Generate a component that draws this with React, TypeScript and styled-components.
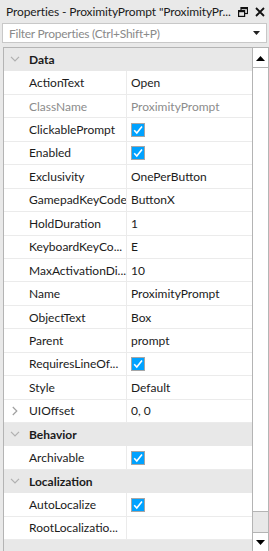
import React from "react";
import styled, { createGlobalStyle } from "styled-components";

const Global = createGlobalStyle`
  html, body { margin: 0; padding: 0; background: #e9e9e9; }
  #root { width: 269px; height: 551px; overflow: hidden; }
  * { box-sizing: border-box; }
`;

const Panel = styled.div`
  width: 269px;
  height: 551px;
  display: flex;
  flex-direction: column;
  background: #e9e9e9;
  font-family: Lato, "Noto Sans", sans-serif;
  font-size: 12px;
  color: #1b1b1b;
`;

const TitleBar = styled.div`
  height: 23px;
  display: flex;
  align-items: center;
  justify-content: space-between;
  padding: 0 4px 0 6px;
  color: #1b1b1b;
  white-space: nowrap;
`;

const TitleText = styled.span`
  letter-spacing: -0.12px;
`;

const TitleIcons = styled.div`
  display: flex;
  align-items: center;
  gap: 7px;
`;

const Filter = styled.div`
  height: 20px;
  margin: 0 2px 0 2px;
  background: #fff;
  border: 1px solid #c8c8c8;
  display: flex;
  align-items: center;
  justify-content: space-between;
  padding: 0 6px 0 6px;
  color: #8a8a8a;
  letter-spacing: -0.25px;
`;

const Frame = styled.div`
  margin: 4px 0 0 3px;
  flex: 1;
  display: flex;
  border: 1px solid #b4b4b4;
  border-right: none;
  border-bottom: none;
  overflow: hidden;
  background: #fff;
`;

const Grid = styled.div`
  flex: 1;
  display: flex;
  flex-direction: column;
  min-width: 0;
`;

const Row = styled.div<{ $header?: boolean }>`
  flex: none;
  height: 23.45px;
  display: flex;
  align-items: stretch;
  background: ${(p) => (p.$header ? "#e8e8e8" : "#fff")};
  border-bottom: 1px solid ${(p) => (p.$header ? "#e8e8e8" : "#ebebeb")};
`;

const Gutter = styled.div`
  width: 24px;
  flex: none;
  display: flex;
  align-items: center;
  justify-content: center;
  padding-right: 2px;
`;

const NameCell = styled.div<{ $dim?: boolean }>`
  width: 99px;
  flex: none;
  display: flex;
  align-items: center;
  padding-left: 1px;
  color: ${(p) => (p.$dim ? "#8c8c8c" : "#1b1b1b")};
  border-right: 1px solid #ebebeb;
  white-space: nowrap;
  overflow: hidden;
`;

const ValueCell = styled.div<{ $dim?: boolean }>`
  flex: 1;
  display: flex;
  align-items: center;
  padding-left: 4px;
  color: ${(p) => (p.$dim ? "#8c8c8c" : "#1b1b1b")};
  white-space: nowrap;
  overflow: hidden;
`;

const HeaderLabel = styled.div`
  display: flex;
  align-items: center;
  font-weight: 700;
  padding-left: 1px;
`;

const Box = styled.div`
  width: 14px;
  height: 14px;
  background: #00a2ff;
  border: 1px solid #a6a6a6;
  display: flex;
  align-items: center;
  justify-content: center;
`;

const Scroll = styled.div`
  width: 17px;
  flex: none;
  display: flex;
  flex-direction: column;
  border-left: 1px solid #b4b4b4;
  border-right: 1px solid #b4b4b4;
  background: #fff;
`;

const ScrollBtn = styled.div<{ $top?: boolean }>`
  height: ${(p) => (p.$top ? "19px" : "18px")};
  flex: none;
  display: flex;
  align-items: center;
  justify-content: center;
  background: #fff;
  border-bottom: ${(p) => (p.$top ? "1px solid #b4b4b4" : "none")};
  margin-top: ${(p) => (p.$top ? "1px" : "0")};
`;

const Thumb = styled.div`
  flex: 1;
  background: #fff;
`;

const Track = styled.div`
  height: 22px;
  flex: none;
  background: #e8e8e8;
  border-top: 1px solid #b4b4b4;
  border-bottom: 1px solid #b4b4b4;
`;

const Check = () => (
  <Box>
    <svg width="12" height="12" viewBox="0 0 12 12">
      <polyline points="2.2,6.2 4.8,9 10,2.6" fill="none" stroke="#fff" strokeWidth="1.6" />
    </svg>
  </Box>
);

const ChevronDown = () => (
  <svg width="10" height="6" viewBox="0 0 10 6">
    <polyline points="1,0.8 5,4.8 9,0.8" fill="none" stroke="#b0b0b0" strokeWidth="1.2" />
  </svg>
);

const ChevronRight = () => (
  <svg width="6" height="10" viewBox="0 0 6 10">
    <polyline points="0.8,1 4.8,5 0.8,9" fill="none" stroke="#a0a0a0" strokeWidth="1.2" />
  </svg>
);

const Tri = ({ up }: { up?: boolean }) => (
  <svg width="9" height="5" viewBox="0 0 9 5">
    <polygon points={up ? "0,5 9,5 4.5,0" : "0,0 9,0 4.5,5"} fill="#000" />
  </svg>
);

type Prop = { name: string; value?: string; check?: boolean; dim?: boolean; expand?: boolean };
type Section = { title: string; props: Prop[] };

const sections: Section[] = [
  {
    title: "Data",
    props: [
      { name: "ActionText", value: "Open" },
      { name: "ClassName", value: "ProximityPrompt", dim: true },
      { name: "ClickablePrompt", check: true },
      { name: "Enabled", check: true },
      { name: "Exclusivity", value: "OnePerButton" },
      { name: "GamepadKeyCode", value: "ButtonX" },
      { name: "HoldDuration", value: "1" },
      { name: "KeyboardKeyCo...", value: "E" },
      { name: "MaxActivationDi...", value: "10" },
      { name: "Name", value: "ProximityPrompt" },
      { name: "ObjectText", value: "Box" },
      { name: "Parent", value: "prompt" },
      { name: "RequiresLineOf...", check: true },
      { name: "Style", value: "Default" },
      { name: "UIOffset", value: "0, 0", expand: true },
    ],
  },
  { title: "Behavior", props: [{ name: "Archivable", check: true }] },
  {
    title: "Localization",
    props: [
      { name: "AutoLocalize", check: true },
      { name: "RootLocalizatio...", value: "" },
    ],
  },
  { title: "", props: [] },
];

export default function App() {
  return (
    <>
      <Global />
      <Panel>
        <TitleBar>
          <TitleText>Properties - ProximityPrompt "ProximityPr...</TitleText>
          <TitleIcons>
            <svg width="10" height="10" viewBox="0 0 10 10">
              <rect x="3" y="0.5" width="6.5" height="6" fill="none" stroke="#111" strokeWidth="1.2" />
              <rect x="3" y="0" width="7" height="2.2" fill="#111" />
              <rect x="0.6" y="3.6" width="6" height="5.8" fill="#e9e9e9" stroke="#111" strokeWidth="1.2" />
              <rect x="0" y="3" width="7" height="2.2" fill="#111" />
            </svg>
            <svg width="10" height="10" viewBox="0 0 10 10">
              <path d="M1 1 L9 9 M9 1 L1 9" stroke="#111" strokeWidth="1.8" />
            </svg>
          </TitleIcons>
        </TitleBar>
        <Filter>
          <span>Filter Properties (Ctrl+Shift+P)</span>
          <svg width="7" height="4" viewBox="0 0 7 4">
            <polygon points="0,0 7,0 3.5,4" fill="#222" />
          </svg>
        </Filter>
        <Frame>
          <Grid>
            {sections.map((s, i) => (
              <React.Fragment key={i}>
                <Row $header>
                  <Gutter>{s.title && <ChevronDown />}</Gutter>
                  <HeaderLabel>{s.title}</HeaderLabel>
                </Row>
                {s.props.map((p) => (
                  <Row key={p.name}>
                    <Gutter>{p.expand && <ChevronRight />}</Gutter>
                    <NameCell $dim={p.dim}>{p.name}</NameCell>
                    <ValueCell $dim={p.dim}>{p.check ? <Check /> : p.value}</ValueCell>
                  </Row>
                ))}
              </React.Fragment>
            ))}
          </Grid>
          <Scroll>
            <ScrollBtn $top>
              <Tri up />
            </ScrollBtn>
            <Thumb />
            <Track />
            <ScrollBtn>
              <Tri />
            </ScrollBtn>
          </Scroll>
        </Frame>
      </Panel>
    </>
  );
}
